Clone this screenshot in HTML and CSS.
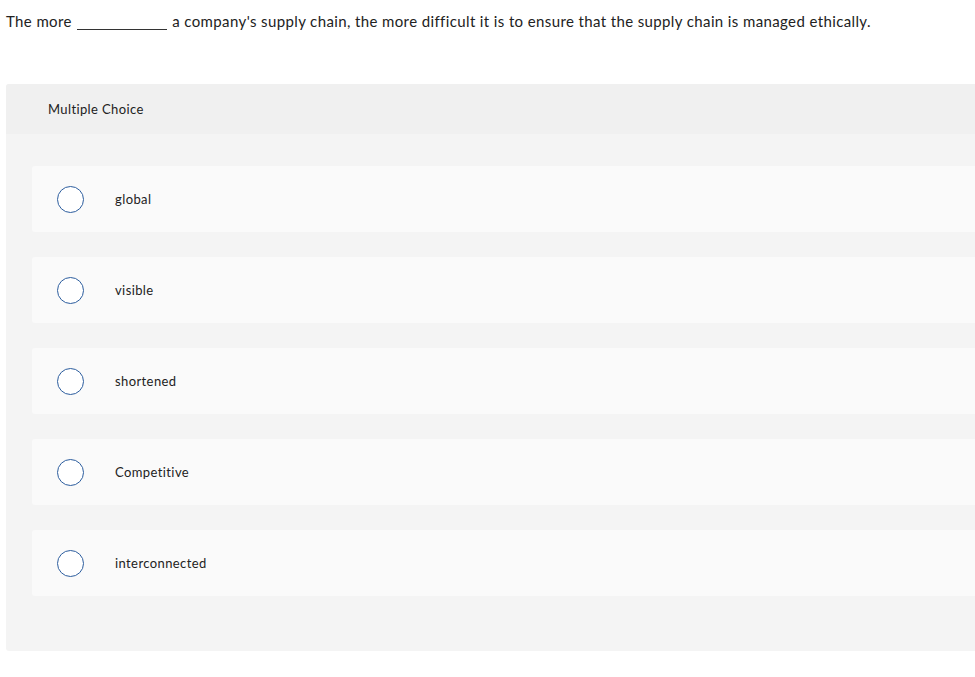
FILE: index.html
```html
<!DOCTYPE html>
<html>
<head>
<meta charset="utf-8">
<link rel="stylesheet" href="styles.css">
</head>
<body>
<div class="page">
  <p class="question">The more <span class="blank"></span> a company's supply chain, the more difficult it is to ensure that the supply chain is managed ethically.</p>
  <div class="panel">
    <div class="panel-head">Multiple Choice</div>
    <div class="panel-body">
      <div class="option"><span class="radio"></span><span class="label">global</span></div>
      <div class="option"><span class="radio"></span><span class="label">visible</span></div>
      <div class="option"><span class="radio"></span><span class="label">shortened</span></div>
      <div class="option"><span class="radio"></span><span class="label">Competitive</span></div>
      <div class="option"><span class="radio"></span><span class="label">interconnected</span></div>
    </div>
  </div>
</div>
</body>
</html>
```
FILE: styles.css
```css
html, body {
  margin: 0;
  padding: 0;
  background: #fff;
  overflow: hidden;
}
.page {
  font-family: Lato, "Liberation Sans", sans-serif;
  color: #222;
  padding: 0 0 0 6px;
}
.question {
  margin: 0;
  padding-top: 11px;
  font-size: 15px;
  line-height: 20px;
  letter-spacing: 0.38px;
  height: 73px;
}
.blank {
  display: inline-block;
  width: 90px;
  border-bottom: 1px solid #333;
  vertical-align: -3px;
  margin: 0 1px;
}
.panel {
  width: 1000px;
  background: #f4f4f4;
  border-radius: 3px;
  padding-bottom: 55px;
}
.panel-head {
  background: #f0f0f0;
  height: 50px;
  box-sizing: border-box;
  padding: 17px 0 0 42px;
  font-size: 13px;
  line-height: 16px;
  letter-spacing: 0.38px;
  color: #222;
  border-radius: 3px 3px 0 0;
}
.panel-body {
  padding: 32px 0 0 26px;
  display: flex;
  flex-direction: column;
  gap: 25px;
}
.option {
  height: 66px;
  background: #fafafa;
  border-radius: 3px;
  display: flex;
  align-items: center;
  padding-left: 25px;
}
.radio {
  width: 25px;
  height: 25px;
  border: 1.3px solid #2c5d9e;
  border-radius: 50%;
  background: #fff;
  flex: none;
}
.label {
  margin-left: 31px;
  font-size: 13px;
  letter-spacing: 0.4px;
  color: #222;
}
```
